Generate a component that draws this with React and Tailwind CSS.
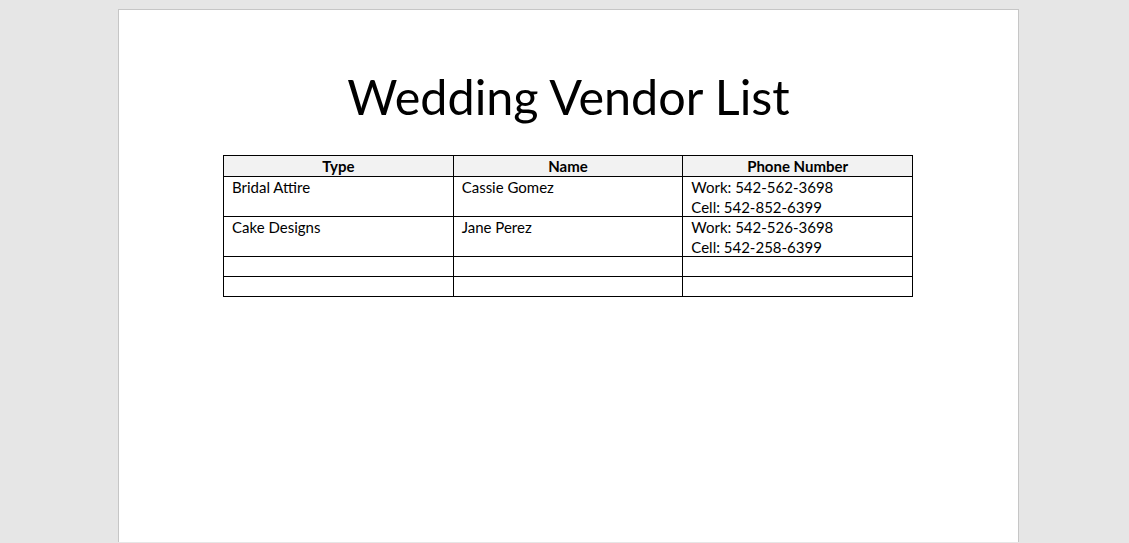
const rows = [
  { type: "Bridal Attire", name: "Cassie Gomez", phones: ["Work: 542-562-3698", "Cell: 542-852-6399"] },
  { type: "Cake Designs", name: "Jane Perez", phones: ["Work: 542-526-3698", "Cell: 542-258-6399"] },
  { type: "", name: "", phones: [] },
  { type: "", name: "", phones: [] },
];

export default function App() {
  return (
    <div className="h-[543px] w-[1129px] overflow-hidden bg-[#e6e6e6] pt-[9px] font-['Lato',sans-serif] text-black">
      <div className="ml-[118px] h-[533px] w-[901px] border border-b-0 border-[#c6c6c6] bg-white">
        <h1 className="pt-[57px] text-center text-[48.5px] leading-[58px]">Wedding Vendor List</h1>
        <table className="ml-[104px] mt-[30px] w-[690px] table-fixed border-collapse text-[15px]">
          <thead>
            <tr className="h-[21px] bg-[#f2f2f2]">
              <th className="border border-black pt-[1px] text-center font-bold leading-[19px]">Type</th>
              <th className="border border-black pt-[1px] text-center font-bold leading-[19px]">Name</th>
              <th className="border border-black pt-[1px] text-center font-bold leading-[19px]">Phone Number</th>
            </tr>
          </thead>
          <tbody>
            {rows.map((r, i) => (
              <tr key={i} className={r.phones.length ? "h-[39px]" : "h-[20px]"}>
                <td className="border border-black px-2 pt-[1px] align-top leading-[19.5px]">{r.type}</td>
                <td className="border border-black px-2 pt-[1px] align-top leading-[19.5px]">{r.name}</td>
                <td className="border border-black px-2 align-top leading-[19px]">
                  {r.phones.map((p, j) => (
                    <div key={p} className={j === 0 ? "h-[20px] pt-[1px]" : "h-[19px] pt-[1px]"}>
                      {p}
                    </div>
                  ))}
                </td>
              </tr>
            ))}
          </tbody>
        </table>
      </div>
    </div>
  );
}
